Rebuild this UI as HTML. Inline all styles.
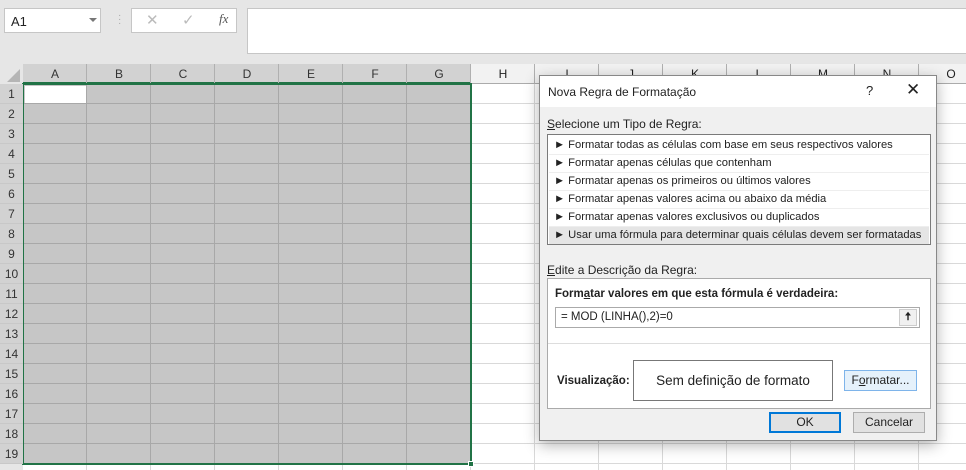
<!DOCTYPE html>
<html><head><style>
*{box-sizing:border-box;margin:0;padding:0}
body{width:966px;height:470px;overflow:hidden;background:#fff;font-family:"Liberation Sans",sans-serif;position:relative;font-size:12px;color:#222}
.a{position:absolute}
</style></head><body>
<div class="a" style="left:0;top:0;width:966px;height:64px;background:#e6e6e6"></div>
<div class="a" style="left:4px;top:8px;width:97px;height:25px;background:#fff;border:1px solid #c6c6c6;font-size:13px;padding:5px 6px">A1</div>
<div class="a" style="left:89px;top:18px;width:0;height:0;border-left:4px solid transparent;border-right:4px solid transparent;border-top:4px solid #777"></div>
<div class="a" style="left:118px;top:14px;color:#aaa;font-size:10px;line-height:4px">·<br>·<br>·</div>
<div class="a" style="left:131px;top:8px;width:106px;height:25px;background:#fff;border:1px solid #c6c6c6"></div>
<div class="a" style="left:146px;top:11px;color:#bbb;font-size:15px">✕</div>
<div class="a" style="left:182px;top:11px;color:#bbb;font-size:15px">✓</div>
<div class="a" style="left:219px;top:11px;color:#555;font-size:13px;font-style:italic;font-family:'Liberation Serif',serif">fx</div>
<div class="a" style="left:247px;top:8px;width:730px;height:46px;background:#fff;border:1px solid #c6c6c6"></div>
<!-- headers -->
<div class="a" style="left:0;top:64px;width:966px;height:20px;background:#f2f2f2;border-bottom:1px solid #ababab"></div>
<div class="a" style="left:23px;top:64px;width:448px;height:20px;background:#d2d2d2;border-bottom:2px solid #217346"></div>
<div class="a" style="left:0;top:64px;width:23px;height:406px;background:#e6e6e6"></div>
<div class="a" style="left:7px;top:69px;width:0;height:0;border-left:13px solid transparent;border-bottom:13px solid #b5b5b5"></div>
<div class="a" style="left:23px;top:64px;width:943px;height:20px;background:repeating-linear-gradient(90deg,transparent 0 63px,#b0b0b0 63px 64px)"></div>
<div id="cols"></div>
<!-- grid -->
<div class="a" style="left:23px;top:84px;width:943px;height:386px;background:repeating-linear-gradient(180deg,transparent 0 19px,#d9d9d9 19px 20px),repeating-linear-gradient(90deg,transparent 0 63px,#d9d9d9 63px 64px)"></div>
<div class="a" style="left:23px;top:84px;width:448px;height:380px;background:repeating-linear-gradient(180deg,transparent 0 19px,#a8a8a8 19px 20px),repeating-linear-gradient(90deg,transparent 0 63px,#a8a8a8 63px 64px),#c6c6c6"></div>
<div class="a" style="left:25px;top:86px;width:61px;height:17px;background:#fff"></div>
<div class="a" style="left:22px;top:83px;width:450px;height:382px;border:2px solid #217346"></div>
<div class="a" style="left:468px;top:461px;width:6px;height:6px;background:#217346;border:1px solid #fff"></div>
<div id="rows"></div>
<!-- dialog -->
<div class="a" style="left:539px;top:75px;width:398px;height:366px;background:#f0f0f0;border:1px solid #888;box-shadow:0 4px 14px rgba(0,0,0,.3)">
 <div class="a" style="left:0;top:0;width:396px;height:31px;background:#fff;font-size:12px;padding:9px 8px">Nova Regra de Formatação</div>
 <div class="a" style="left:326px;top:7px;font-size:13px">?</div>
 <div class="a" style="left:366px;top:4px;font-size:17px">✕</div>
 <div class="a" style="left:7px;top:41px"><u>S</u>elecione um Tipo de Regra:</div>
 <div class="a" style="left:7px;top:58px;width:384px;height:111px;background:#fff;border:1px solid #7a7a7a;padding:2px 1px;font-size:11.2px;line-height:17px;overflow:hidden">
  <div style="padding-left:5px;border-bottom:1px solid #eee">► Formatar todas as células com base em seus respectivos valores</div>
  <div style="padding-left:5px;border-bottom:1px solid #eee">► Formatar apenas células que contenham</div>
  <div style="padding-left:5px;border-bottom:1px solid #eee">► Formatar apenas os primeiros ou últimos valores</div>
  <div style="padding-left:5px;border-bottom:1px solid #eee">► Formatar apenas valores acima ou abaixo da média</div>
  <div style="padding-left:5px;border-bottom:1px solid #eee">► Formatar apenas valores exclusivos ou duplicados</div>
  <div style="padding-left:5px;background:#e5e5e5;white-space:nowrap">► Usar uma fórmula para determinar quais células devem ser formatadas</div>
 </div>
 <div class="a" style="left:7px;top:187px"><u>E</u>dite a Descrição da Regra:</div>
 <div class="a" style="left:7px;top:202px;width:384px;height:131px;background:#fff;border:1px solid #aaa">
  <div class="a" style="left:7px;top:9px;font-weight:bold;font-size:11.5px">Form<u>a</u>tar valores em que esta fórmula é verdadeira:</div>
  <div class="a" style="left:7px;top:28px;width:365px;height:21px;border:1px solid #aaa;padding:3px 5px;font-size:11.5px">= MOD (LINHA(),2)=0</div>
  <div class="a" style="left:351px;top:30px;width:18px;height:17px;border:1px solid #ccc;background:#f0f0f0;text-align:center;font-size:11px;font-weight:bold;line-height:15px">🠅</div>
  <div class="a" style="left:0;top:64px;width:382px;height:1px;background:#ddd"></div>
  <div class="a" style="left:9px;top:96px;font-weight:bold;font-size:11.5px">Visualização:</div>
  <div class="a" style="left:85px;top:81px;width:200px;height:41px;border:1px solid #777;font-size:13.5px;text-align:center;line-height:39px">Sem definição de formato</div>
  <div class="a" style="left:296px;top:91px;width:73px;height:21px;border:1px solid #7eb4ea;background:#e5f1fb;text-align:center;line-height:19px">F<u>o</u>rmatar...</div>
 </div>
 <div class="a" style="left:229px;top:336px;width:72px;height:21px;border:2px solid #0078d7;background:#e1e1e1;text-align:center;line-height:17px">OK</div>
 <div class="a" style="left:313px;top:336px;width:72px;height:21px;border:1px solid #adadad;background:#e1e1e1;text-align:center;line-height:19px">Cancelar</div>
</div>
<script>
var c="ABCDEFGHIJKLMNO",h="";
for(var i=0;i<15;i++)h+='<div class="a" style="left:'+(23+i*64)+'px;top:67px;width:64px;text-align:center;font-size:12px;color:'+(i<7?'#333':'#222')+'">'+c[i]+'</div>';
document.getElementById('cols').innerHTML=h;h="";
for(var r=1;r<=19;r++)h+='<div class="a" style="left:0;top:'+(64+r*20)+'px;width:23px;height:20px;border-bottom:1px solid #c8c8c8;background:#d2d2d2;text-align:center;line-height:20px;font-size:12px;color:#333">'+r+'</div>';
document.getElementById('rows').innerHTML=h;
</script>
</body></html>
